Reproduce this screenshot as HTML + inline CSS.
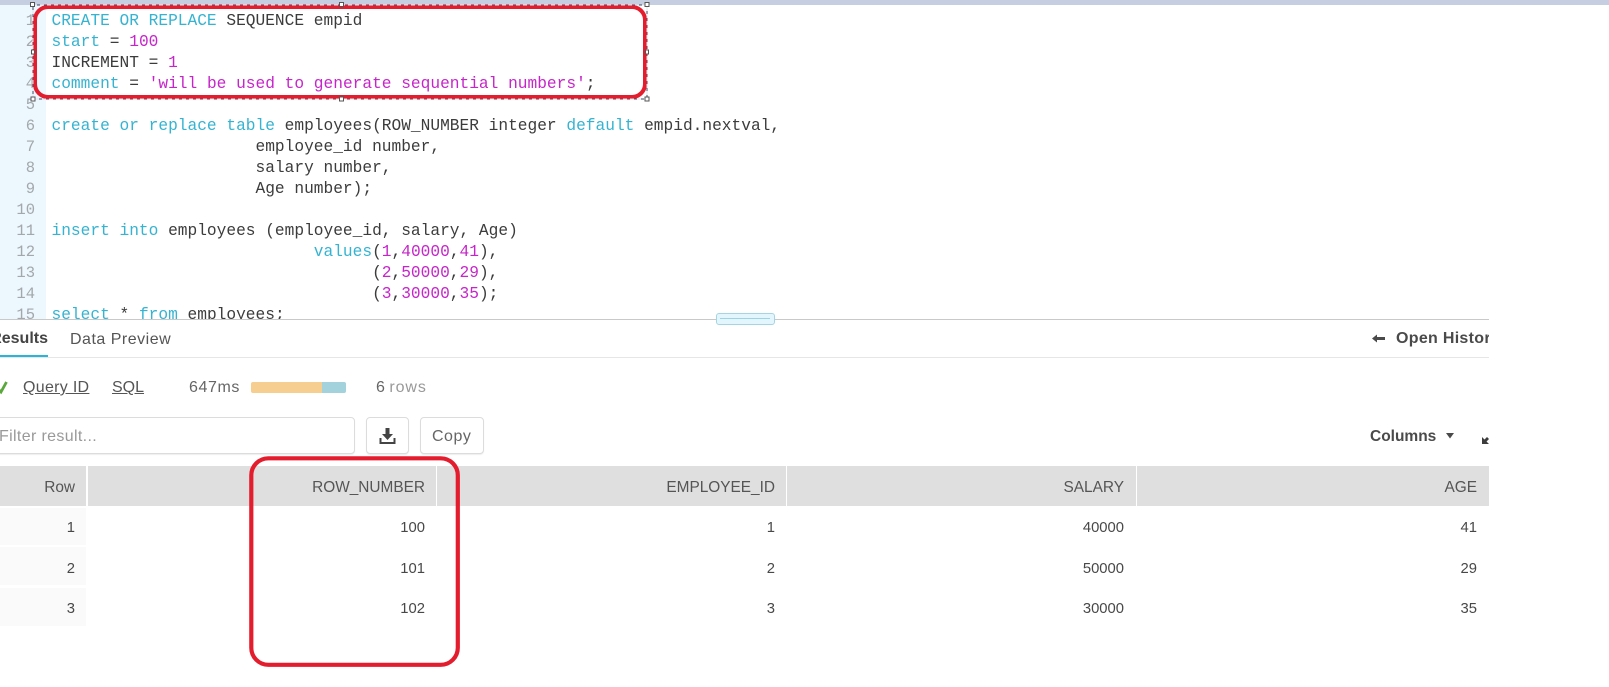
<!DOCTYPE html>
<html><head><meta charset="utf-8"><style>
html,body{margin:0;padding:0;background:#fff;width:1609px;height:687px;overflow:hidden}
body{position:relative;font-family:"Liberation Sans",sans-serif;color:#444}
.a{position:absolute;white-space:nowrap}
#code{position:absolute;left:0;top:0;width:1489px;height:319px;overflow:hidden}
#gut{position:absolute;left:0;top:0;width:46px;height:319px;background:#ecf8fd}
.l{position:absolute;left:51.500px;font:16.200px/21px "Liberation Mono",monospace;color:#3c3c3c;white-space:pre}
.n{position:absolute;left:0;width:35px;text-align:right;font:15.500px/21px "Liberation Mono",monospace;color:#a3a8ac}
.k{color:#35b3d1}.v{color:#c626c9}
.h{position:absolute;top:466px;height:40px;background:#dfdfdf}
.r{text-align:right;font-size:15.400px;line-height:20px;color:#555}
.c{position:absolute;text-align:right;font-size:14.800px;line-height:20px;color:#484848}
.t{font-size:16px;line-height:20px}
.b{position:absolute;box-sizing:border-box;border:1px solid #dcdcdc;border-radius:4px;background:#fff;box-shadow:0 1px 1px #eee}
</style></head><body>
<div class="a" style="left:0;top:0;width:1609px;height:5px;background:#c5cfe1"></div>
<div id="code">
<div id="gut" style="top:5px;height:314px"></div>
<div class="n" style="top:11px">1</div><div class="n" style="top:32px">2</div><div class="n" style="top:53px">3</div><div class="n" style="top:74px">4</div><div class="n" style="top:95px">5</div><div class="n" style="top:116px">6</div><div class="n" style="top:137px">7</div><div class="n" style="top:158px">8</div><div class="n" style="top:179px">9</div><div class="n" style="top:200px">10</div><div class="n" style="top:221px">11</div><div class="n" style="top:242px">12</div><div class="n" style="top:263px">13</div><div class="n" style="top:284px">14</div><div class="n" style="top:305px">15</div>
<div class="l" style="top:11px"><span class="k">CREATE OR REPLACE</span> SEQUENCE empid</div>
<div class="l" style="top:32px"><span class="k">start</span> = <span class="v">100</span></div>
<div class="l" style="top:53px">INCREMENT = <span class="v">1</span></div>
<div class="l" style="top:74px"><span class="k">comment</span> = <span class="v">'will be used to generate sequential numbers'</span>;</div>
<div class="l" style="top:116px"><span class="k">create or replace table</span> employees(ROW_NUMBER integer <span class="k">default</span> empid.nextval,</div>
<div class="l" style="top:137px">                     employee_id number,</div>
<div class="l" style="top:158px">                     salary number,</div>
<div class="l" style="top:179px">                     Age number);</div>
<div class="l" style="top:221px"><span class="k">insert into</span> employees (employee_id, salary, Age)</div>
<div class="l" style="top:242px">                           <span class="k">values</span>(<span class="v">1</span>,<span class="v">40000</span>,<span class="v">41</span>),</div>
<div class="l" style="top:263px">                                 (<span class="v">2</span>,<span class="v">50000</span>,<span class="v">29</span>),</div>
<div class="l" style="top:284px">                                 (<span class="v">3</span>,<span class="v">30000</span>,<span class="v">35</span>);</div>
<div class="l" style="top:305px"><span class="k">select</span> * <span class="k">from</span> employees;</div>
</div>
<div class="a" style="left:0;top:319px;width:1489px;height:1px;background:#c9c9c9"></div>
<div class="a" style="left:716px;top:313px;width:59px;height:12px;box-sizing:border-box;background:#e3f6fd;border:1px solid #a5d5e4;border-radius:3px"></div>
<div class="a" style="left:720px;top:318px;width:50px;height:1px;background:#9fd3e3"></div>

<div class="a t" style="right:1561px;top:329px;font-weight:bold;color:#444">Results</div>
<div class="a t" style="left:70px;top:330px;color:#555;letter-spacing:.5px">Data Preview</div>
<div class="a" style="left:0;top:355px;width:48px;height:2px;background:#29b5d9"></div>
<div class="a" style="left:0;top:357px;width:1489px;height:1px;background:#e6e6e6"></div>
<div class="a t" style="left:1396px;top:329px;width:93px;overflow:hidden;font-weight:bold;color:#4a4a4a;letter-spacing:.3px">Open History</div>
<div class="a t" style="left:23px;top:378px;text-decoration:underline;color:#555;letter-spacing:.3px">Query ID</div>
<div class="a t" style="left:112px;top:378px;text-decoration:underline;color:#555">SQL</div>
<div class="a t" style="left:189px;top:378px;color:#666;letter-spacing:.6px">647ms</div>
<div class="a" style="left:251px;top:382px;width:71px;height:11px;background:#f6cf90;border-radius:2px 0 0 2px"></div>
<div class="a" style="left:322px;top:382px;width:24px;height:11px;background:#a3d1dc;border-radius:0 2px 2px 0"></div>
<div class="a t" style="left:376px;top:378px;color:#666">6 <span style="color:#999;letter-spacing:.9px">rows</span></div>

<div class="b" style="left:-6px;top:417px;width:361px;height:37px"></div>
<div class="a t" style="left:-1px;top:426.500px;color:#999;letter-spacing:.35px">Filter result...</div>
<div class="b" style="left:366px;top:417px;width:43px;height:37px"></div>
<div class="b" style="left:420px;top:417px;width:64px;height:37px"></div>
<div class="a t" style="left:432px;top:426.500px;color:#666;letter-spacing:.5px">Copy</div>
<div class="a" style="left:1370px;top:427px;font-size:15.500px;line-height:20px;font-weight:bold;color:#4a4a4a">Columns</div>

<div class="h" style="left:0;width:86px"></div>
<div class="h" style="left:88px;width:348px"></div>
<div class="h" style="left:437px;width:349px"></div>
<div class="h" style="left:787px;width:349px"></div>
<div class="h" style="left:1137px;width:352px"></div>
<div class="a r" style="right:1534px;top:477.500px">Row</div>
<div class="a r" style="right:1184px;top:477.500px">ROW_NUMBER</div>
<div class="a r" style="right:834px;top:477.500px">EMPLOYEE_ID</div>
<div class="a r" style="right:485px;top:477.500px">SALARY</div>
<div class="a r" style="right:132px;top:477.500px">AGE</div>

<div class="a" style="left:0;top:508px;width:86px;height:37px;background:#fafafa"></div>
<div class="a" style="left:0;top:547px;width:86px;height:38px;background:#fafafa"></div>
<div class="a" style="left:0;top:588px;width:86px;height:38px;background:#fafafa"></div>

<div class="c" style="right:1534px;top:518px">1</div><div class="c" style="right:1184px;top:518px">100</div><div class="c" style="right:834px;top:518px">1</div><div class="c" style="right:485px;top:518px">40000</div><div class="c" style="right:132px;top:518px">41</div>
<div class="c" style="right:1534px;top:559px">2</div><div class="c" style="right:1184px;top:559px">101</div><div class="c" style="right:834px;top:559px">2</div><div class="c" style="right:485px;top:559px">50000</div><div class="c" style="right:132px;top:559px">29</div>
<div class="c" style="right:1534px;top:599px">3</div><div class="c" style="right:1184px;top:599px">102</div><div class="c" style="right:834px;top:599px">3</div><div class="c" style="right:485px;top:599px">30000</div><div class="c" style="right:132px;top:599px">35</div>

<svg class="a" style="left:0;top:0" width="1609" height="687" viewBox="0 0 1609 687">
<path d="M-3 388l4 4 5.500-10" fill="none" stroke="#5aa83c" stroke-width="2.800"/>
<path d="M1372 338.500l5-4v2.500h8v3h-8v2.500z" fill="#4a4a4a"/>
<path d="M385.500 428h4v6h3.500l-5.500 6-5.500-6h3.500z" fill="#444"/>
<path d="M380.500 438v5h14v-5" fill="none" stroke="#444" stroke-width="2"/>
<path d="M1446 433h8l-4 5.500z" fill="#4a4a4a"/>
<path d="M1482 444v-7l2.500 2.500 2.500-2.500 2 2-2.500 2.500 2.500 2.500z" fill="#3c3c3c"/>
<rect x="33" y="5" width="614" height="94" fill="none" stroke="#3f4a6b" stroke-width="1"/>
<rect x="35" y="7" width="610" height="90" rx="13" fill="none" stroke="#e31d2d" stroke-width="4"/>
<rect x="33" y="5" width="614" height="94" fill="none" stroke="#fff" stroke-width="1" stroke-dasharray="4 3" opacity=".85"/>
<g fill="#fff" stroke="#555" stroke-width="1"><rect x="30.500" y="2.500" width="4" height="4"/><rect x="339.500" y="2.500" width="4" height="4"/><rect x="645" y="2.500" width="4" height="4"/><rect x="31.500" y="50" width="3" height="4"/><rect x="645.500" y="50" width="3" height="4"/><rect x="31" y="97" width="4" height="4"/><rect x="339.500" y="97" width="4" height="4"/><rect x="645" y="97" width="4" height="4"/></g>
<rect x="251.300" y="458.300" width="206.500" height="206.500" rx="17" fill="none" stroke="#e31d2d" stroke-width="4.200"/>
</svg>
</body></html>
